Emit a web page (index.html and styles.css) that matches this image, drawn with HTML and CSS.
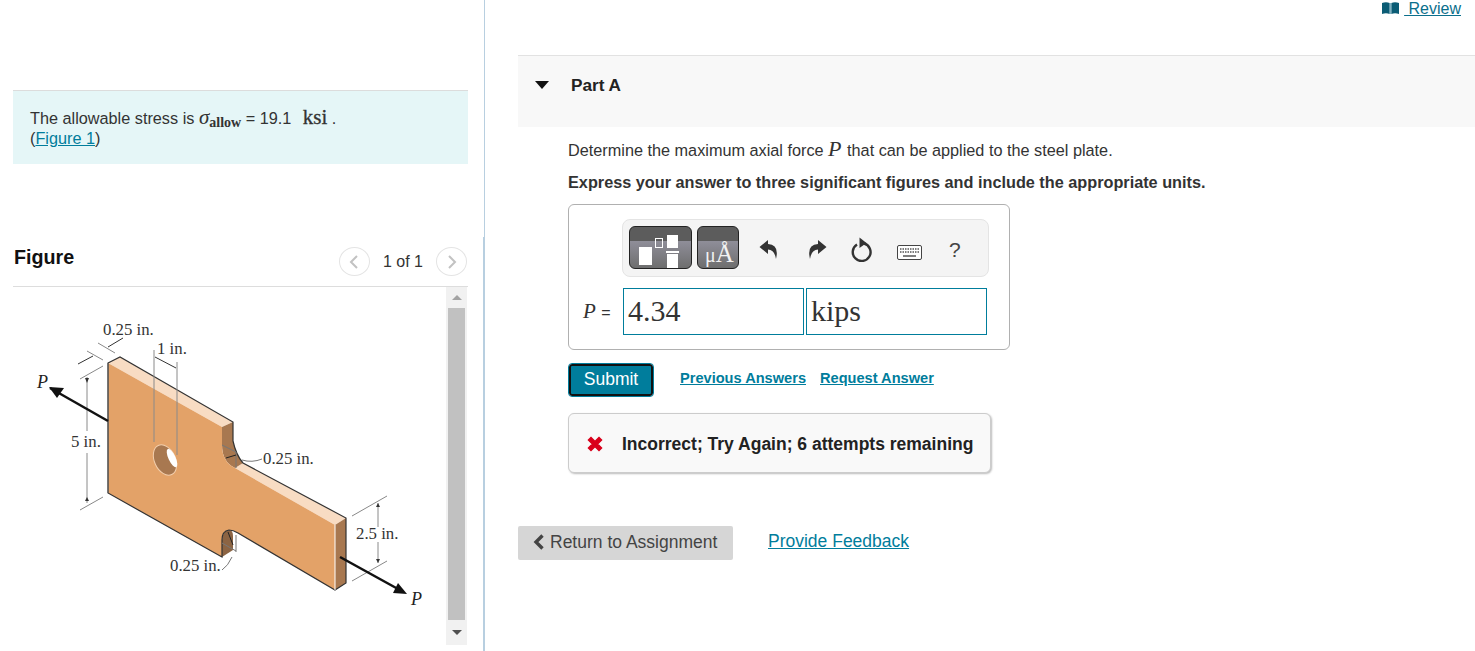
FILE: index.html
```html
<!DOCTYPE html>
<html lang="en">
<head>
<meta charset="utf-8">
<title>Part A</title>
<link rel="stylesheet" href="styles.css">
</head>
<body>
<div class="page">
  <aside class="left">
    <div class="intro">
      <div class="intro-line">The allowable stress is <span class="sigma">σ</span><span class="allow">allow</span> = 19.1 <span class="ksi">ksi</span> .</div>
      <div class="intro-line">(<a href="#" class="link">Figure 1</a>)</div>
    </div>
    <div class="fig-head">
      <h2 class="fig-title">Figure</h2>
      <div class="pager">
        <span class="circle"><svg width="12" height="16" viewBox="0 0 12 16"><path d="M9 2 L3 8 L9 14" fill="none" stroke="#c2c2c2" stroke-width="2"/></svg></span>
        <span class="count">1 of 1</span>
        <span class="circle"><svg width="12" height="16" viewBox="0 0 12 16"><path d="M3 2 L9 8 L3 14" fill="none" stroke="#c2c2c2" stroke-width="2"/></svg></span>
      </div>
    </div>
    <div class="fig-body">
      <svg class="plate" width="433" height="358" viewBox="13 287 433 358">
        <g class="soft">
          <polygon points="108,363 120,357 233,422 222,427" fill="#f8dcc3"/>
          <polygon points="235,468 243,463 346,518 335,525" fill="#f8dcc3"/>
          <path d="M222,427 L233,422 V441 Q236,455 243,463 L235,468 Q222,462 222,445 Z" fill="#a87850"/>
          <polygon points="335,525 346,518 346,583 335,590" fill="#a87850"/>
          <path d="M222,557 V540 Q223,530 229,530 Q233,530 233,536 V550 Z" fill="#8c6443"/>
          <path d="M108,363 L222,427 V445 Q222,462 235,468 L335,525 V590 L238,533 Q233,530 229,530 Q222,531 222,540 V557 L108,493 Z" fill="#e3a268"/>
          <ellipse cx="165" cy="460" rx="10.500" ry="16" transform="rotate(-25 165 460)" fill="#a87850" stroke="#f3cfae" stroke-width="1"/>
          <ellipse cx="172" cy="458" rx="3.500" ry="10" transform="rotate(-25 172 458)" fill="#fff"/>
          <path d="M108,363 L120,357 L233,422 V441 Q236,455 243,463 L346,518 V583 L335,590 L238,533 Q233,530 229,530 Q222,531 222,540 V557 L108,493 Z" fill="none" stroke="#333" stroke-width="1.200"/>
          <line x1="335" y1="525" x2="335" y2="590" stroke="#fff" stroke-width="1"/>
          <path d="M108,363 V493" stroke="#666" fill="none"/>
          <path d="M154,350 V442 M177,362 V455 M87,377 V431 M87,453 V503 M378,503 V527 M378,542 V563" stroke="#8a8a8a" fill="none"/>
          <path d="M80,379 L103,366 M80,510 L103,497 M352,516 L387,496 M352,581 L387,561 M87,351 L103,360 M98,343 L115,353" stroke="#888" fill="none"/>
          <path d="M155,357 L176,368 M78,364 L93,356 M108,347 L123,338" stroke="#333" fill="none"/>
          <path d="M85,378 L87,383 L89,378 Z M85,501 L87,497 L89,501 Z M376,507 L378,503 L380,507 Z M376,559 L378,563 L380,559 Z" fill="#333"/>
          <path d="M50,388 L108,421" stroke="#111" stroke-width="2.500" fill="none"/>
          <polygon points="49,387 64,388 57,398" fill="#111"/>
          <path d="M340,557 L398,589" stroke="#111" stroke-width="2.500" fill="none"/>
          <polygon points="407,594 393,593 398,583" fill="#111"/>
          <path d="M262,459 Q252,463 242,460 M222,570 Q228,566 232,557" stroke="#777" fill="none"/>
          <path d="M222,445 L236,452 V468 M222,543 L236,551 M236,535 V552" stroke="#777" fill="none"/>
          <path d="M226,458 L236,455 M228,532 L233,545" stroke="#222" fill="none"/>
        </g>
        <g class="dim">
          <text x="103" y="335">0.25 in.</text>
          <text x="157" y="354">1 in.</text>
          <text x="71" y="447">5 in.</text>
          <text x="263" y="464">0.25 in.</text>
          <text x="356" y="539">2.5 in.</text>
          <text x="170" y="571">0.25 in.</text>
          <text x="37" y="388" class="load">P</text>
          <text x="411" y="605" class="load">P</text>
        </g>
      </svg>
      <div class="scrollbar">
        <div class="arrow-up"></div>
        <div class="thumb"></div>
        <div class="arrow-down"></div>
      </div>
    </div>
  </aside>
  <main class="right">
    <div class="topbar">
      <svg class="book" width="17" height="12" viewBox="0 0 17 12"><path d="M0 1 Q4 -0.500 7.700 1 V12 Q4 10.500 0 12 Z M9.300 1 Q13 -0.500 17 1 V12 Q13 10.500 9.300 12 Z" fill="#0b5c75"/><rect x="7.700" y="1" width="1.600" height="11" fill="#7fb2c2"/></svg>
      <a href="#" class="link review">&nbsp;Review</a>
    </div>
    <div class="part-head">
      <svg class="caret" width="14" height="8" viewBox="0 0 14 8"><path d="M0 0 H14 L7 8 Z" fill="#111"/></svg>
      <h3 class="part-title">Part A</h3>
    </div>
    <div class="part-body">
      <p class="q">Determine the maximum axial force <span class="var">P</span> that can be applied to the steel plate.</p>
      <p class="instr">Express your answer to three significant figures and include the appropriate units.</p>
      <div class="answer">
        <div class="toolbar">
          <div class="tbtn tbtn-wide">
            <svg width="63" height="43" viewBox="0 0 63 43">
              <rect x="10" y="21" width="13" height="18" fill="#fff"/>
              <rect x="26.500" y="12.500" width="7" height="9" fill="none" stroke="#fff"/>
              <rect x="38" y="9" width="11" height="13" fill="#fff"/>
              <rect x="37" y="25" width="13" height="2" fill="#fff"/>
              <rect x="38" y="28" width="11" height="14" fill="#fff"/>
            </svg>
          </div>
          <div class="tbtn tbtn-unit"><span class="mu"><span class="mu-small">μ</span>Å</span></div>
          <svg class="ti ti-undo" width="19" height="21" viewBox="0 0 19 21"><path d="M9 1 L0.500 8 L9 15 V10.500 Q15.500 10.500 17 20 Q20.500 5.500 9 5 Z" fill="#333"/></svg>
          <svg class="ti ti-redo" width="19" height="21" viewBox="0 0 19 21"><path d="M10 1 L18.500 8 L10 15 V10.500 Q3.500 10.500 2 20 Q-1.500 5.500 10 5 Z" fill="#333"/></svg>
          <svg class="ti ti-reset" width="22" height="25" viewBox="0 0 22 25"><path d="M7 7.500 A8.900 8.900 0 1 0 14 6.500" fill="none" stroke="#333" stroke-width="2.400"/><path d="M9.500 0.500 L16.500 6 L9.500 11 Z" fill="#333"/></svg>
          <svg class="ti ti-keys" width="25" height="15" viewBox="0 0 25 15"><rect x="0.500" y="0.500" width="24" height="14" rx="1.500" fill="#fff" stroke="#444"/><path d="M3 4 H22 M3 7 H22" stroke="#555" stroke-width="1.500" stroke-dasharray="1.500 1"/><path d="M6 11 H19" stroke="#555" stroke-width="1.500"/></svg>
          <span class="help">?</span>
        </div>
        <div class="eqn">
          <span class="eq-label"><span class="var-sm">P</span> =</span>
          <div class="field">4.34</div>
          <div class="field">kips</div>
        </div>
      </div>
      <div class="actions">
        <button class="submit" type="button">Submit</button>
        <a href="#" class="link action action-first">Previous Answers</a>
        <a href="#" class="link action">Request Answer</a>
      </div>
      <div class="feedback">
        <svg width="18" height="18" viewBox="0 0 18 18"><path d="M2.500 5 L5 2.500 L9 6.500 L13 2.500 L15.500 5 L11.500 9 L15.500 13 L13 15.500 L9 11.500 L5 15.500 L2.500 13 L6.500 9 Z" fill="#d9001b" stroke="#d9001b" stroke-width="1.500"/></svg>
        <span class="fb-text">Incorrect; Try Again; 6 attempts remaining</span>
      </div>
    </div>
    <div class="footer">
      <a href="#" class="return"><svg width="12" height="16" viewBox="0 0 12 16"><path d="M9.500 1.500 L3 8 L9.500 14.500" fill="none" stroke="#444" stroke-width="3.400"/></svg>Return to Assignment</a>
      <a href="#" class="link provide">Provide Feedback</a>
    </div>
  </main>
</div>
</body>
</html>
```
FILE: styles.css
```css
* { box-sizing: border-box; }
html, body { margin: 0; padding: 0; }
body {
  font-family: "Liberation Sans", Arial, sans-serif;
  font-size: 16.250px;
  color: #333;
  background: #fff;
}
.page { display: flex; width: 1475px; height: 651px; overflow: hidden; }
.link { color: #007d9c; text-decoration: underline; }

.left { position: relative; width: 485px; flex: none; border-right: 1px solid #b8cfe0; padding: 90px 16px 0 13px; }
.left::after {
  content: ""; position: absolute; right: 0; top: 237px; bottom: 0;
  width: 1px; background: #b8cfe0;
}
.intro {
  width: 455px; height: 74px;
  background: #e5f6f7;
  border-top: 1px solid #dcdcdc;
  padding: 17px 17px 0;
}
.intro-line { height: 20px; line-height: 20px; }
.sigma { font-family: "Liberation Serif", serif; font-style: italic; font-size: 21px; line-height: 0; }
.allow { font-family: "Liberation Serif", serif; font-weight: bold; font-size: 14px; line-height: 0; vertical-align: -3px; }
.ksi { font-family: "Liberation Serif", serif; font-size: 21px; line-height: 0; margin-left: 7px; -webkit-text-stroke: 0.300px #333; }

.fig-head {
  display: flex; justify-content: space-between; align-items: center;
  width: 455px; height: 51px; margin-top: 72px;
  padding: 9px 1px 8px 1px;
  border-bottom: 1px solid #ddd;
}
.fig-title { margin: 0 0 8px; font-size: 19.700px; font-weight: bold; color: #111; }
.pager { display: flex; align-items: center; gap: 13px; }
.circle {
  width: 31px; height: 29px; border: 1px solid #e4e4e4; border-radius: 50%;
  display: flex; align-items: center; justify-content: center;
}
.count { font-size: 16px; }

.fig-body { display: flex; width: 455px; }
.plate { flex: none; }
.soft { filter: blur(0.350px); }
.dim text { font-family: "Liberation Serif", serif; font-size: 16.800px; fill: #333; }
.dim .load { font-style: italic; fill: #222; font-size: 18px; }
.scrollbar { width: 21px; height: 358px; background: #f1f1f1; display: flex; flex-direction: column; align-items: center; }
.arrow-up { width: 0; height: 0; margin: 8px 0 8px; border: 5px solid transparent; border-top: 0; border-bottom: 5px solid #a3a3a3; }
.thumb { width: 17px; height: 312px; background: #c1c1c1; flex: none; }
.arrow-down { width: 0; height: 0; margin-top: 10px; border: 5px solid transparent; border-bottom: 0; border-top: 5px solid #505050; }

.right { flex: 1; min-width: 0; }
.topbar { height: 55px; display: flex; justify-content: flex-end; align-items: flex-start; padding-right: 14px; }
.book { margin: 2px 5px 0 0; }
.review { line-height: 17px; color: #0b6f8c; font-size: 16px; }
.part-head {
  margin-left: 33px; height: 72px;
  background: #f8f8f8; border-top: 1px solid #e2e2e2;
  display: flex; align-items: center;
  padding: 0 0 14px 17px; gap: 22px;
}
.part-title { margin: 2px 0 0; font-size: 17.200px; font-weight: bold; color: #222; }
.caret { flex: none; }

.part-body { margin-left: 83px; }
.q { margin: 13px 0 0; line-height: 20px; height: 22px; }
.var { font-family: "Liberation Serif", serif; font-style: italic; font-size: 22px; line-height: 0; margin-right: 1px; }
.instr { margin: 10px 0 0; font-weight: bold; line-height: 20px; }
.answer {
  width: 442px; height: 146px; margin-top: 12px;
  border: 1px solid #b0b0b0; border-radius: 6px;
  padding: 14px 20px 0 14px;
}
.toolbar {
  margin-left: 39px; width: 367px; height: 58px;
  background: #f4f4f4; border: 1px solid #e4e4e4; border-radius: 8px;
  display: flex; align-items: center; padding: 0 0 0 6px;
}
.tbtn {
  height: 43px; border: 1px solid #222; border-radius: 6px; margin-bottom: 2px;
  background: linear-gradient(#5c5c5c 0 14px, #8f8e99 14px, #6e6e6e 100%);
  overflow: hidden; position: relative; flex: none;
}
.tbtn svg { display: block; position: absolute; left: -1px; top: -1px; }
.tbtn-wide { width: 63px; }
.tbtn-unit { width: 42px; margin-left: 5px; }
.mu { font-family: "Liberation Serif", serif; font-size: 25px; color: #f2f2f2; position: absolute; left: 7px; bottom: -2px; line-height: 30px; white-space: nowrap; }
.mu-small { font-size: 20px; }
.ti { flex: none; margin-top: 3px; }
.ti-undo { margin-left: 20px; }
.ti-redo { margin-left: 30px; }
.ti-reset { margin-left: 23px; }
.ti-keys { margin-left: 25px; margin-top: 8px; }
.help { margin-left: 27px; font-size: 21px; line-height: 24px; color: #444; margin-top: 3px; }
.eqn { display: flex; align-items: center; margin-top: 11px; }
.eq-label { width: 40px; font-size: 16px; white-space: nowrap; }
.var-sm { font-family: "Liberation Serif", serif; font-style: italic; font-size: 21px; margin-right: 1px; }
.field {
  width: 181px; height: 47px; margin-right: 2px;
  border: 1px solid #007d9c;
  font-family: "Liberation Serif", serif; font-size: 30px; line-height: 43px;
  padding-left: 4px; color: #333;
}
.actions { display: flex; align-items: center; margin-top: 14px; margin-left: 1px; height: 32px; }
.submit {
  width: 84px; height: 32px; padding: 0 0 2px;
  background: #007d9c; color: #fff;
  border: 2px solid #111; outline: 1px solid #007d9c; outline-offset: 0;
  border-radius: 3px;
  font-family: "Liberation Sans", Arial, sans-serif; font-size: 17.500px;
}
.action { font-weight: bold; font-size: 14.600px; padding-bottom: 4px; }
.action-first { margin-left: 27px; margin-right: 14px; }
.feedback {
  width: 423px; height: 60px; margin-top: 17px;
  background: #f9f9f9; border: 1px solid #ccc; border-radius: 6px;
  box-shadow: 1px 1px 2px #bbb;
  display: flex; align-items: center; padding: 2px 0 0 17px; gap: 18px;
}
.fb-text { font-weight: bold; font-size: 17.500px; color: #222; }
.footer { margin: 53px 0 0 33px; display: flex; align-items: center; }
.return {
  width: 215px; height: 34px; background: #d6d6d6; border-radius: 2px;
  display: flex; align-items: center; padding: 0 0 2px 15px; gap: 5px;
  font-size: 17.500px; color: #444; text-decoration: none;
}
.provide { margin-left: 35px; font-size: 17.500px; padding-bottom: 4px; }
```
